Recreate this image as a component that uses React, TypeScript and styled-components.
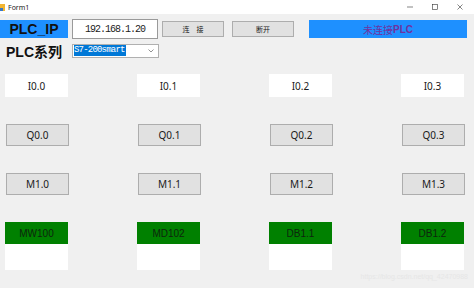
import styled, { createGlobalStyle } from 'styled-components'

const GlobalStyle = createGlobalStyle`
  html, body {
    margin: 0;
    padding: 0;
    background: #f0f0f0;
    font-family: "Noto Sans", "Noto Sans CJK SC", sans-serif;
  }
`

const Window = styled.div`
  width: 474px;
  height: 288px;
  display: flex;
  flex-direction: column;
  background: #f0f0f0;
  overflow: hidden;
  position: relative;
`

const TitleBar = styled.div`
  height: 14px;
  background: #ffffff;
  display: flex;
  align-items: center;
  flex-shrink: 0;
`

const AppIcon = styled.svg`
  margin-left: 0;
  width: 5px;
  height: 7px;
`

const Title = styled.span`
  margin-left: 3px;
  font-size: 7px;
  color: #222;
  font-family: "Noto Sans", sans-serif;
`

const Controls = styled.div`
  margin-left: auto;
  display: flex;
  align-items: center;
  gap: 19px;
  padding-right: 11px;
  svg {
    width: 6px;
    height: 6px;
  }
`

const Body = styled.div`
  padding-top: 5px;
  display: flex;
  flex-direction: column;
`

const Row = styled.div<{ $top?: number }>`
  display: flex;
  align-items: center;
  margin-top: ${(p) => p.$top ?? 0}px;
`

const HeadLabel = styled.div<{ $blue?: boolean }>`
  width: 68px;
  height: ${(p) => (p.$blue ? 18 : 19)}px;
  background: ${(p) => (p.$blue ? '#1e90ff' : 'transparent')};
  display: flex;
  align-items: center;
  justify-content: center;
  font-family: "Liberation Sans", "Noto Sans CJK SC", sans-serif;
  font-weight: bold;
  font-size: 14px;
  color: #111;
`

const IpBox = styled.div`
  margin-left: 4px;
  width: 86px;
  height: 20px;
  box-sizing: border-box;
  background: #fff;
  border: 1px solid #9a9a9a;
  display: flex;
  align-items: center;
  justify-content: center;
  font-family: "Liberation Mono", monospace;
  font-size: 10px;
  letter-spacing: -1px;
  color: #222;
`

const WinButton = styled.button<{ $gap?: number; $w?: number; $h?: number; $size?: number }>`
  margin: 0 0 0 ${(p) => p.$gap ?? 0}px;
  padding: 0;
  width: ${(p) => p.$w ?? 63}px;
  height: ${(p) => p.$h ?? 22}px;
  box-sizing: border-box;
  background: #e1e1e1;
  border: 1px solid #adadad;
  border-radius: 0;
  color: #1a1a1a;
  font-family: "Noto Sans", "Noto Sans CJK SC", sans-serif;
  font-size: ${(p) => p.$size ?? 10}px;
  display: flex;
  align-items: center;
  justify-content: center;
`

const Status = styled.div`
  margin-left: 15px;
  width: 158px;
  height: 18px;
  background: #1e90ff;
  color: #7030a0;
  display: flex;
  align-items: center;
  justify-content: center;
  font-size: 10px;
  font-family: "Liberation Serif", "Noto Sans CJK SC", serif;
  b {
    font-family: "Liberation Sans", sans-serif;
    font-weight: bold;
  }
`

const Combo = styled.div`
  margin-left: 4px;
  width: 87px;
  height: 14px;
  box-sizing: border-box;
  background: #fff;
  border: 1px solid #b0b0b0;
  display: flex;
  align-items: center;
  padding-left: 1px;
  position: relative;
`

const Selected = styled.span`
  background: #0078d7;
  color: #fff;
  font-family: "Liberation Mono", monospace;
  font-size: 9px;
  letter-spacing: -0.8px;
  line-height: 11px;
  height: 11px;
  padding-right: 1px;
`

const Arrow = styled.svg`
  margin-left: auto;
  margin-right: 4px;
  width: 6px;
  height: 4px;
`

const Grid = styled.div`
  margin-top: 14px;
  padding-left: 5px;
  display: grid;
  grid-template-columns: repeat(4, 63px);
  column-gap: 69px;
  row-gap: 27px;
`

const InputCell = styled.div`
  height: 23px;
  background: #fff;
  display: flex;
  align-items: center;
  justify-content: center;
  font-size: 10px;
  color: #1a1a1a;
`

const Register = styled.div`
  display: flex;
  flex-direction: column;
`

const RegisterName = styled.div`
  height: 22px;
  background: #008000;
  display: flex;
  align-items: center;
  justify-content: center;
  font-size: 10px;
  font-family: "Liberation Sans", sans-serif;
  color: #0d260d;
`

const RegisterValue = styled.div`
  height: 26px;
  background: #fff;
`

const Watermark = styled.div`
  position: absolute;
  right: 6px;
  bottom: 8px;
  font-size: 7px;
  color: #e6e6e6;
  font-family: "Liberation Sans", sans-serif;
`

const inputs = ['I0.0', 'I0.1', 'I0.2', 'I0.3']
const outputs = ['Q0.0', 'Q0.1', 'Q0.2', 'Q0.3']
const marks = ['M1.0', 'M1.1', 'M1.2', 'M1.3']
const registers = ['MW100', 'MD102', 'DB1.1', 'DB1.2']

export default function App() {
  return (
    <>
      <GlobalStyle />
      <Window>
        <TitleBar>
          <AppIcon viewBox="0 0 5 7">
            <rect x="0" y="0" width="5" height="7" fill="#f2b531" />
            <rect x="0" y="4" width="3" height="3" fill="#3b78c4" />
          </AppIcon>
          <Title>Form1</Title>
          <Controls>
            <svg viewBox="0 0 6 6">
              <line x1="0" y1="3" x2="6" y2="3" stroke="#333" strokeWidth="0.6" />
            </svg>
            <svg viewBox="0 0 6 6">
              <rect x="0.5" y="0.5" width="5" height="5" fill="none" stroke="#333" strokeWidth="0.6" />
            </svg>
            <svg viewBox="0 0 6 6">
              <path d="M0.5 0.5 L5.5 5.5 M5.5 0.5 L0.5 5.5" stroke="#333" strokeWidth="0.6" />
            </svg>
          </Controls>
        </TitleBar>
        <Body>
          <Row>
            <HeadLabel $blue>PLC_IP</HeadLabel>
            <IpBox>192.168.1.20</IpBox>
            <WinButton $gap={4} $w={62} $h={16} $size={7}>连　接</WinButton>
            <WinButton $gap={8} $w={62} $h={16} $size={7}>断开</WinButton>
            <Status>
              未连接<b>PLC</b>
            </Status>
          </Row>
          <Row $top={2}>
            <HeadLabel>PLC系列</HeadLabel>
            <Combo>
              <Selected>S7-200smart</Selected>
              <Arrow viewBox="0 0 6 4">
                <path d="M0.5 0.5 L3 3 L5.5 0.5" fill="none" stroke="#777" strokeWidth="0.8" />
              </Arrow>
            </Combo>
          </Row>
          <Grid>
            {inputs.map((name) => (
              <InputCell key={name}>{name}</InputCell>
            ))}
            {outputs.map((name) => (
              <WinButton key={name} $gap={1}>
                {name}
              </WinButton>
            ))}
            {marks.map((name) => (
              <WinButton key={name} $gap={1}>
                {name}
              </WinButton>
            ))}
            {registers.map((name) => (
              <Register key={name}>
                <RegisterName>{name}</RegisterName>
                <RegisterValue />
              </Register>
            ))}
          </Grid>
        </Body>
        <Watermark>https://blog.csdn.net/qq_42470988</Watermark>
      </Window>
    </>
  )
}
